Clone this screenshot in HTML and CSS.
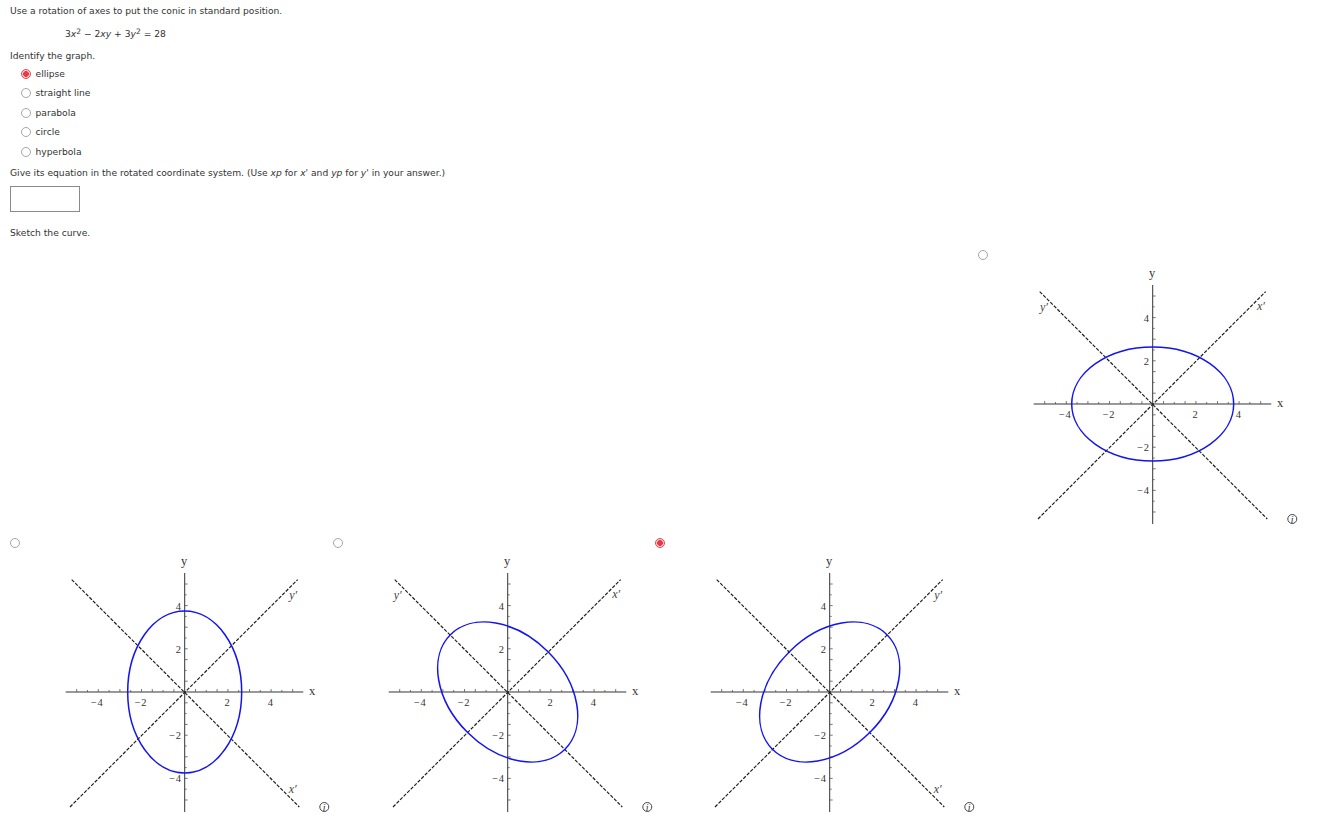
FILE: index.html
```html
<!DOCTYPE html>
<html lang="en">
<head>
<meta charset="utf-8">
<title>Rotation of axes</title>
<link rel="stylesheet" href="styles.css">
</head>
<body>
<svg class="defs" width="0" height="0" aria-hidden="true">
  <defs>
    <g id="axes">
      <path class="axis" d="M-119 0H118.600M0-119V120"/>
      <path class="tick" d="M-108-3V0M-97.200-2V0M-86.400-3V0M-75.600-2V0M-64.800-3V0M-54-2V0M-43.200-3V0M-32.400-3V0M-21.600-2V0M-10.800-3V0M10.800-3V0M21.600-2V0M32.400-3V0M43.200-3V0M54-2V0M64.800-3V0M75.600-2V0M86.400-3V0M97.200-2V0M108-3V0"/>
      <path class="tick" d="M0-108H3M0-97.200H2M0-86.400H3M0-75.600H2M0-64.800H3M0-54H2M0-43.200H3M0-32.400H3M0-21.600H2M0-10.800H3M0 10.800H3M0 21.600H2M0 32.400H3M0 43.200H3M0 54H2M0 64.800H3M0 75.600H2M0 86.400H3M0 97.200H2M0 108H3"/>
      <path class="dash" d="M-113-112.400L114.600 115M-114.700 115L113-112.400"/>
      <text class="num" x="-87.500" y="14.500">−4</text>
      <text class="num" x="-43.700" y="14.500">−2</text>
      <text class="num" x="42.800" y="14.500">2</text>
      <text class="num" x="86" y="14.500">4</text>
      <text class="num end" x="-3" y="-82.500">4</text>
      <text class="num end" x="-3" y="-39.500">2</text>
      <text class="num end" x="-3" y="47">−2</text>
      <text class="num end" x="-3" y="90.500">−4</text>
      <text class="var" x="127.500" y="3.500">x</text>
      <text class="var" x="-0.500" y="-127">y</text>
      <circle class="info" cx="139.600" cy="115" r="4.500"/>
      <text class="info-i" x="139.400" y="119">i</text>
    </g>
  </defs>
</svg>

<main class="page">
  <p class="line first">Use a rotation of axes to put the conic in standard position.</p>
  <p class="line equation">3<i>x</i><sup>2</sup> − 2<i>xy</i> + 3<i>y</i><sup>2</sup> = 28</p>
  <p class="line identify">Identify the graph.</p>
  <ul class="options">
    <li><label class="option"><input class="radio" type="radio" name="graph" checked>ellipse</label></li>
    <li><label class="option"><input class="radio" type="radio" name="graph">straight line</label></li>
    <li><label class="option"><input class="radio" type="radio" name="graph">parabola</label></li>
    <li><label class="option"><input class="radio" type="radio" name="graph">circle</label></li>
    <li><label class="option"><input class="radio" type="radio" name="graph">hyperbola</label></li>
  </ul>
  <p class="line give">Give its equation in the rotated coordinate system. (Use <i>xp</i> for <i>x'</i> and <i>yp</i> for <i>y'</i> in your answer.)</p>
  <input class="answer" type="text" aria-label="Equation">
  <p class="line sketch">Sketch the curve.</p>

  <div class="graphs">
    <div class="graph slot-d">
      <input class="radio" type="radio" name="curve">
      <svg class="plot" viewBox="-174.700 -144 322.670 272">
        <use href="#axes"/>
        <ellipse class="conic" rx="81" ry="57"/>
        <text class="prime" x="-108.700" y="-93">y′</text>
        <text class="prime" x="108.300" y="-94">x′</text>
      </svg>
    </div>
    <div class="graph slot-a">
      <input class="radio" type="radio" name="curve">
      <svg class="plot" viewBox="-174.700 -144 322.670 272">
        <use href="#axes"/>
        <ellipse class="conic" rx="57" ry="81"/>
        <text class="prime" x="108.500" y="-93">y′</text>
        <text class="prime" x="108" y="101">x′</text>
      </svg>
    </div>
    <div class="graph slot-b">
      <input class="radio" type="radio" name="curve">
      <svg class="plot" viewBox="-174.700 -144 322.670 272">
        <use href="#axes"/>
        <ellipse class="conic" rx="81" ry="57" transform="rotate(45)"/>
        <text class="prime" x="-110" y="-93">y′</text>
        <text class="prime" x="108.500" y="-94">x′</text>
      </svg>
    </div>
    <div class="graph slot-c">
      <input class="radio" type="radio" name="curve" checked>
      <svg class="plot" viewBox="-174.700 -144 322.670 272">
        <use href="#axes"/>
        <ellipse class="conic" rx="81" ry="57" transform="rotate(-45)"/>
        <text class="prime" x="108.500" y="-93">y′</text>
        <text class="prime" x="108" y="101">x′</text>
      </svg>
    </div>
  </div>
</main>
</body>
</html>
```
FILE: styles.css
```css
* { box-sizing: border-box; }

html, body { margin: 0; padding: 0; background: #fff; }

body {
  font-family: "DejaVu Sans", Verdana, sans-serif;
  font-size: 9.170px;
  line-height: 12px;
  color: #333;
}

.defs { display: block; height: 0; overflow: hidden; }

.page { padding: 5px 0 0 10px; }

.line { margin: 0; height: 12px; }
.first { margin-bottom: 11px; }
.equation { margin-left: 55px; margin-bottom: 10px; }
.identify { margin-bottom: 5.600px; }
.give { margin-top: 9.400px; }

.equation sup { font-size: 7.500px; line-height: 0; vertical-align: 3.500px; }

.options { list-style: none; margin: 0; padding: 0 0 0 11px; display: flex; flex-direction: column; gap: 7.500px; }

.option { display: flex; align-items: center; height: 12px; }
.option .radio { margin-right: 4.500px; }

.radio {
  appearance: none;
  -webkit-appearance: none;
  display: block;
  flex: none;
  width: 10px;
  height: 10px;
  margin: 0;
  border: 1px solid #a5a5ad;
  border-radius: 50%;
  background: #fff;
}
.radio:checked {
  border: 1px solid #e8444e;
  background: radial-gradient(circle, #e63a44 0 2.600px, #fbd5d7 3.200px, #fbd5d7 4px);
}

.graph .radio { margin-top: 0.500px; margin-bottom: -0.500px; }

.answer {
  display: block;
  width: 70px;
  height: 26px;
  margin: 7px 0 15px;
  padding: 0;
  border: 1px solid #8a8a8a;
  border-radius: 0;
  background: #fff;
}

.graphs {
  display: grid;
  grid-template-columns: repeat(4, 322.670px);
  grid-template-rows: repeat(2, 288px);
  margin-top: 11px;
}

.slot-d { grid-column: 4; grid-row: 1; }
.slot-a { grid-column: 1; grid-row: 2; }
.slot-b { grid-column: 2; grid-row: 2; }
.slot-c { grid-column: 3; grid-row: 2; }

.plot { display: block; width: 322.670px; height: 272px; }

.axis { fill: none; stroke: #333; stroke-width: 1; }
.tick { fill: none; stroke: #555; stroke-width: 0.800; }
.dash { fill: none; stroke: #1a1a1a; stroke-width: 1.150; stroke-dasharray: 3.500 1.500; }
.conic { fill: none; stroke: #1414f0; stroke-width: 1.500; }

.num { font-family: "Liberation Serif", serif; font-size: 10.500px; letter-spacing: 0.600px; fill: #333; text-anchor: middle; }
.num.end { text-anchor: end; }
.var { font-family: "Liberation Serif", serif; font-size: 12.500px; fill: #333; text-anchor: middle; }
.prime { font-family: "Liberation Serif", serif; font-style: italic; font-size: 12px; fill: #444; text-anchor: middle; }
.info { fill: #fff; stroke: #444; stroke-width: 1; }
.info-i { font-family: "Liberation Serif", serif; font-style: italic; font-size: 10px; fill: #333; text-anchor: middle; }
```
